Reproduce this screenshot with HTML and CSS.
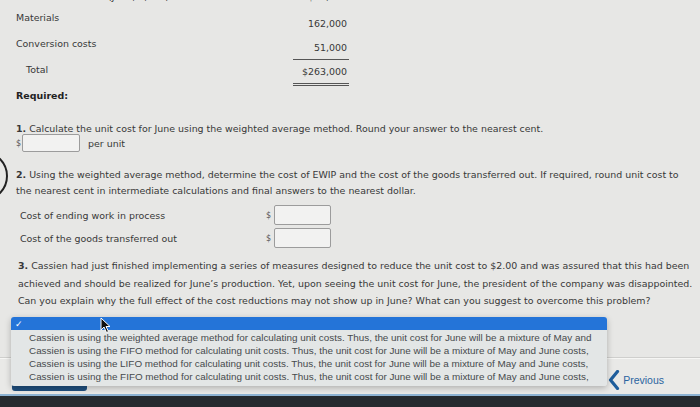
FILE: index.html
```html
<!DOCTYPE html>
<html>
<head>
<meta charset="utf-8">
<link rel="stylesheet" href="styles.css">
</head>
<body>
<div class="page">
  <div class="sheet">
    <div class="row row-cut">
      <div class="lab lab-cut">(June, 3,470)</div>
      <div class="val">$50,000</div>
    </div>
    <div class="row row-mat">
      <div class="lab">Materials</div>
      <div class="val">162,000</div>
    </div>
    <div class="row row-conv">
      <div class="lab">Conversion costs</div>
      <div class="val val-line">51,000</div>
    </div>
    <div class="row row-total">
      <div class="lab lab-indent">Total</div>
      <div class="val val-double">$263,000</div>
    </div>

    <div class="required">Required:</div>

    <p class="q1"><b>1.</b> Calculate the unit cost for June using the weighted average method. Round your answer to the nearest cent.</p>
    <div class="answer-row">
      <span class="dollar">$</span><span class="input input-unit"></span><span class="per">per unit</span>
    </div>

    <p class="q2"><b>2.</b> Using the weighted average method, determine the cost of EWIP and the cost of the goods transferred out. If required, round unit cost to the nearest cent in intermediate calculations and final answers to the nearest dollar.</p>
    <div class="item">
      <span class="item-lab">Cost of ending work in process</span><span class="dollar">$</span><span class="input input-cost"></span>
    </div>
    <div class="item">
      <span class="item-lab">Cost of the goods transferred out</span><span class="dollar">$</span><span class="input input-cost"></span>
    </div>

    <p class="q3"><b>3.</b> Cassien had just finished implementing a series of measures designed to reduce the unit cost to $2.00 and was assured that this had been achieved and should be realized for June’s production. Yet, upon seeing the unit cost for June, the president of the company was disappointed. Can you explain why the full effect of the cost reductions may not show up in June? What can you suggest to overcome this problem?</p>
  </div>

  <div class="footer">
    <div class="hidden-btn"></div>
    <div class="prev">
      <svg class="chev" width="12" height="20" viewBox="0 0 12 20"><polyline points="9.5,1.5 2.5,10 9.5,18.5" fill="none" stroke="#1f5e9c" stroke-width="3.2" stroke-linejoin="round" stroke-linecap="round"/></svg>
      <span>Previous</span>
    </div>
  </div>
  <div class="bezel"></div>

  <svg class="arc" width="10" height="44" viewBox="0 0 10 44"><circle cx="-17" cy="21" r="24" fill="none" stroke="#222" stroke-width="2"/></svg>

  <div class="menu">
    <div class="menu-sel"><span class="check">✓</span></div>
    <div class="menu-opts">
      <div class="opt">Cassien is using the weighted average method for calculating unit costs. Thus, the unit cost for June will be a mixture of May and</div>
      <div class="opt">Cassien is using the FIFO method for calculating unit costs. Thus, the unit cost for June will be a mixture of May and June costs,</div>
      <div class="opt">Cassien is using the LIFO method for calculating unit costs. Thus, the unit cost for June will be a mixture of May and June costs,</div>
      <div class="opt">Cassien is using the FIFO method for calculating unit costs. Thus, the unit cost for June will be a mixture of May and June costs,</div>
    </div>
  </div>

  <svg class="cursor" width="12" height="17" viewBox="0 0 12 17"><path d="M1 1 L1 13 L4 10 L6.5 15.5 L8.5 14.5 L6 9.5 L10 9.5 Z" fill="#111" stroke="#fff" stroke-width="1"/></svg>
</div>
</body>
</html>
```
FILE: styles.css
```css
* { box-sizing: border-box; }
html, body { margin: 0; padding: 0; }
body {
  width: 700px;
  height: 407px;
  overflow: hidden;
  background: #e7e7e5;
  font-family: "DejaVu Sans", Verdana, sans-serif;
  font-size: 9.45px;
  color: #383838;
}
.page {
  position: relative;
  width: 700px;
  height: 407px;
  overflow: hidden;
  display: flex;
  flex-direction: column;
}
.sheet {
  padding-left: 16px;
  height: 357px;
  flex: none;
  overflow: hidden;
}
.row { display: flex; line-height: 14px; }
.row .lab { width: 277px; }
.row .val { width: 56px; text-align: right; padding-right: 2px; }
.row-cut { margin-top: -10px; padding-bottom: 3px; }
.lab-cut { padding-left: 92px; }
.row-mat .lab { margin-top: 4px; }
.row-mat .val { margin-top: 10px; }
.row-conv .lab { margin-top: 6px; }
.row-conv .val { margin-top: 10px; }
.val-line { padding-bottom: 4px; border-bottom: 1px solid #555; }
.row-total .lab { margin-top: 3px; }
.row-total .val { margin-top: 5px; }
.lab-indent { padding-left: 10px; }
.val-double { padding-bottom: 4px; border-bottom: 3px double #555; }

.required {
  margin-top: 3px;
  font-weight: bold;
  line-height: 14px;
  color: #222;
}
p { margin: 0; }
.q1 { margin-top: 20px; line-height: 12px; }
.answer-row {
  display: flex;
  align-items: center;
  margin-top: -1px;
  height: 18px;
}
.dollar { font-size: 8px; color: #555; width: 6px; }
.input {
  display: block;
  background: #f2f2f1;
  border: 1px solid #9c9c9c;
  border-radius: 2px;
}
.input-unit { width: 58px; height: 18px; }
.per { margin-left: 8px; }
.q2 { margin-top: 15px; line-height: 16px; padding-right: 4px; }
.item {
  display: flex;
  align-items: center;
  height: 20px;
  padding-left: 4px;
  margin-top: 3px;
}
.q2 + .item { margin-top: 6px; }
.item-lab { width: 246px; }
.item .dollar { width: 8px; }
.input-cost { width: 57px; height: 20px; }
.q3 { margin-top: 9px; line-height: 17.5px; padding-left: 2px; padding-right: 0; }

.footer {
  height: 37px;
  flex: none;
  border-top: 1px solid #cfcfcd;
  box-shadow: inset 0 1px 0 #f6f6f4;
  display: flex;
  justify-content: space-between;
  align-items: flex-start;
  padding-right: 36px;
  padding-left: 12px;
  background: #e9e9e7;
}
.hidden-btn {
  width: 75px;
  height: 22px;
  margin-top: 11px;
  background: #1f4f7e;
  border-radius: 3px;
}
.prev {
  display: flex;
  align-items: center;
  gap: 3px;
  margin-top: 12px;
  font-family: "Liberation Sans", Arial, sans-serif;
  font-size: 10.5px;
  color: #2a64a0;
}
.bezel {
  flex: none;
  height: 13px;
  background: #262b2f;
  border-top: 2px solid #8db3d3;
}

.arc { position: absolute; left: 0; top: 155px; }

.menu {
  position: absolute;
  left: 11px;
  top: 317px;
  width: 596px;
  font-family: "Liberation Sans", Arial, sans-serif;
  font-size: 9.9px;
  box-shadow: 0 2px 6px rgba(0,0,0,0.25);
  border-radius: 3px;
  overflow: hidden;
}
.menu-sel {
  height: 13px;
  background: #2474d8;
  color: #fff;
  line-height: 13px;
  padding-left: 4px;
}
.check { font-size: 9px; font-family: "DejaVu Sans", sans-serif; }
.menu-opts {
  background: #e3e6e6;
  padding: 1px 0 3px 18px;
  color: #464a4c;
}
.opt { line-height: 13px; white-space: nowrap; }
.cursor { position: absolute; left: 100px; top: 317px; }
```
